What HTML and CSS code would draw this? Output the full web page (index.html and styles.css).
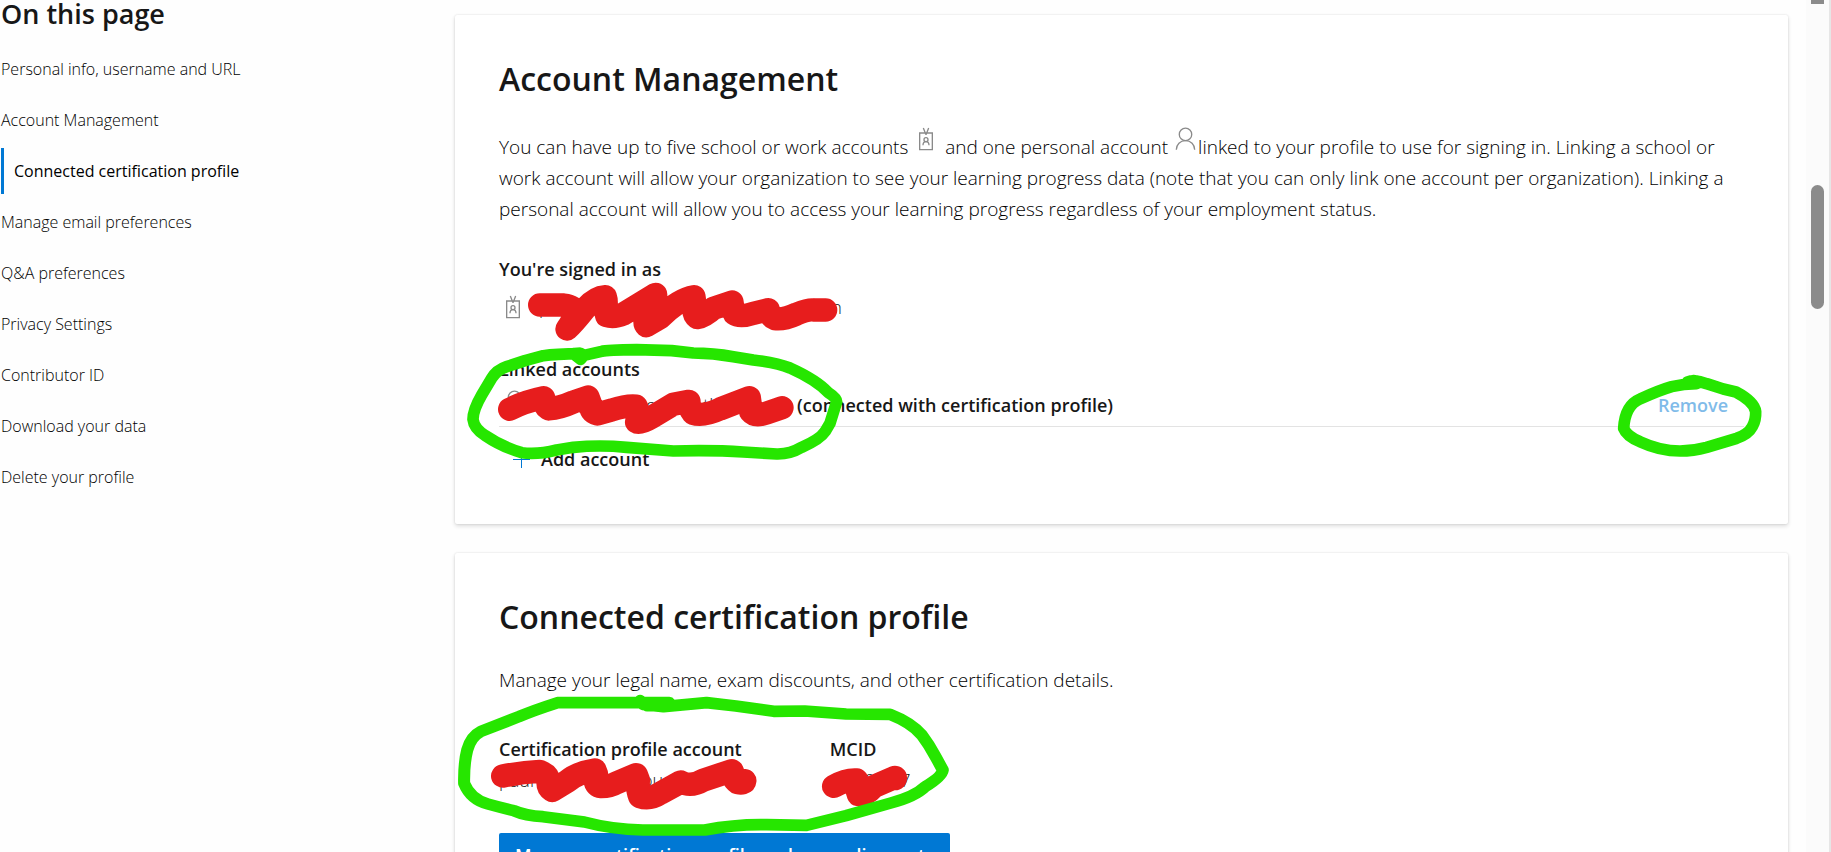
FILE: index.html
```html
<!DOCTYPE html>
<html lang="en">
<head>
<meta charset="utf-8">
<title>Profile settings</title>
<link rel="stylesheet" href="styles.css">
</head>
<body>
<svg class="defs" aria-hidden="true">
  <symbol id="badge" viewBox="0 0 48 72">
    <path d="M5 18h38v50H5zM16 3l8 20M32 3l-8 20M15 55c0-8 4-11 9-11s9 3 9 11" />
    <circle cx="24" cy="38" r="6" />
  </symbol>
  <symbol id="person" viewBox="0 0 64 72">
    <circle cx="32" cy="22" r="19" />
    <path d="M4 69c0-16 12-28 28-28s28 12 28 28" />
  </symbol>
</svg>
<div class="page">
  <nav class="toc" aria-labelledby="toc-title">
    <h2 class="toc-title" id="toc-title">On this page</h2>
    <ul class="toc-list">
      <li><a class="toc-link" href="#info">Personal info, username and URL</a></li>
      <li><a class="toc-link" href="#account">Account Management</a></li>
      <li><a class="toc-link active" href="#certification">Connected certification profile</a></li>
      <li><a class="toc-link" href="#email">Manage email preferences</a></li>
      <li><a class="toc-link" href="#qna">Q&amp;A preferences</a></li>
      <li><a class="toc-link" href="#privacy">Privacy Settings</a></li>
      <li><a class="toc-link" href="#contributor">Contributor ID</a></li>
      <li><a class="toc-link" href="#download">Download your data</a></li>
      <li><a class="toc-link" href="#delete">Delete your profile</a></li>
    </ul>
  </nav>
  <main class="content">
    <section class="card" id="account">
      <h2 class="card-title">Account Management</h2>
      <p class="text">You can have up to five school or work accounts <svg class="icon badge inline"><use href="#badge" /></svg> and one personal account <svg class="icon person inline"><use href="#person" /></svg>linked to your profile to use for signing in. Linking a school or work account will allow your organization to see your learning progress data (note that you can only link one account per organization). Linking a personal account will allow you to access your learning progress regardless of your employment status.</p>
      <h3 class="label signed">You're signed in as</h3>
      <div class="signed-row">
        <svg class="icon badge"><use href="#badge" /></svg>
        <span class="masked"><span>p</span><span>n</span></span>
      </div>
      <h3 class="label linked">Linked accounts</h3>
      <div class="linked-row">
        <span class="linked-account"><svg class="icon person"><use href="#person" /></svg><span>ou</span><span>tl</span></span>
        <span class="strong">(connected with certification profile)</span>
        <button class="remove" type="button" disabled>Remove</button>
      </div>
      <button class="add" type="button"><svg class="plus" viewBox="0 0 17 17"><path d="M8 0h1v8h8v1H9v8H8V9H0V8h8z" /></svg>Add account</button>
    </section>
    <section class="card" id="certification">
      <h2 class="card-title">Connected certification profile</h2>
      <p class="text">Manage your legal name, exam discounts, and other certification details.</p>
      <dl class="details">
        <div><dt class="label">Certification profile account</dt><dd class="fragments"><span>paul</span><span>ou</span></dd></div>
        <div><dt class="label">MCID</dt><dd class="fragments mcid"><span>9</span><span>9</span><span>7</span></dd></div>
      </dl>
      <button class="primary" type="button">Manage certification profile and exam discounts</button>
    </section>
  </main>
  <div class="scrollbar" aria-hidden="true"><span class="arrow"></span><span class="thumb"></span></div>

  <svg class="ink ink-accounts" viewBox="0 0 1200 840" aria-hidden="true">
    <g class="red">
      <path d="M239 165H312Q342 168 345 188Q340 212 321 237Q340 220 375 176Q405 142 436 140Q440 152 438 166Q435 185 440 197Q462 204 490 192L587 133V147Q567 180 556 208Q553 222 559 227L600 203Q655 148 702 140Q705 155 702 175Q700 194 712 203Q735 198 760 175L816 156Q818 174 823 191Q840 203 880 190L925 179Q930 200 945 206Q970 210 1010 192Q1045 178 1060 180H1097" />
      <path d="M149 478Q190 456 251 443Q250 466 266 477Q300 474 340 456L384 441L392 463Q389 486 412 492L455 480Q500 465 528 468Q538 485 530 516Q540 523 575 502L640 463L687 454Q687 475 699 490Q730 500 780 477L868 443Q872 465 872 485Q885 501 920 489L966 473" />
    </g>
    <path class="green" d="M362 328L340 311L362 310Q285 312 250 317L195 332L140 350Q110 360 95 385L65 435Q39 480 39 508Q42 535 75 556Q125 590 185 608Q230 615 290 600L340 592Q420 584 500 592L640 603Q760 600 850 606L950 612Q990 613 1025 592Q1080 568 1095 545L1110 520L1130 455Q1130 444 1105 428Q1070 390 990 354Q950 338 880 330L820 320Q760 309 700 309L635 302L530 299Q440 300 425 304L372 316Z" />
  </svg>
  <svg class="ink ink-remove" viewBox="0 0 813 570" aria-hidden="true">
    <path class="green" d="M382 66Q400 60 418 65L410 71Q370 72 335 80Q300 90 240 117Q195 136 191 205Q200 228 240 245Q300 273 360 273Q400 273 440 262L530 235Q565 223 577 200Q588 180 587 155Q583 125 528 96L490 87L440 71Q420 64 400 62Z" />
  </svg>
  <svg class="ink ink-cert" viewBox="0 0 1568 816" preserveAspectRatio="none" aria-hidden="true">
    <g class="red">
      <path d="M154 588Q210 576 260 574Q285 584 286 604Q284 622 297 631L340 604Q370 578 420 570Q428 586 423 603Q424 618 440 620Q464 620 480 610L540 584L546 600Q544 630 552 650Q580 660 610 640L670 606Q700 622 735 601L818 572L828 600L835 608Q854 612 855 602" />
      <path d="M1115 619Q1150 598 1180 600Q1180 625 1187 644Q1205 648 1230 620L1292 592V596" />
    </g>
    <path class="green" d="M552 362L572 377H622L637 368H312Q240 392 200 410L90 454Q60 470 50 510Q40 550 41 610Q60 658 110 672Q145 682 185 692Q220 708 270 710L390 726Q470 748 560 750H740Q830 732 920 734L1035 736L1150 707L1280 669Q1350 650 1380 620Q1428 590 1431 570L1410 530Q1390 492 1370 465Q1340 428 1278 403L1150 402L1030 393L940 394L830 378L745 368L620 380L560 373Z" />
  </svg>
</div>
</body>
</html>
```
FILE: styles.css
```css
* { box-sizing: border-box; }

body {
  margin: 0;
  overflow: hidden;
  background: #fefefe;
  color: #171717;
  font-family: "Segoe UI", "Open Sans", sans-serif;
  font-size: 18px;
  line-height: 31px;
}

h2, h3, p, ul, dl, dd { margin: 0; padding: 0; }
ul { list-style: none; }
button { font: inherit; border: 0; background: none; padding: 0; }
.defs { position: absolute; width: 0; height: 0; }

.page {
  position: relative;
  display: grid;
  grid-template-columns: 455px 1fr 25px;
  height: 100vh;
  overflow: hidden;
}

.toc { padding-left: 1px; }
.toc-title {
  margin-bottom: 18px;
  font-size: 27px;
  font-weight: 600;
  line-height: 28px;
}
.toc-list { display: flex; flex-direction: column; gap: 5px; }
.toc-link {
  display: block;
  color: #000;
  font-size: 16px;
  font-weight: 300;
  line-height: 46px;
  text-decoration: none;
}
.toc-link.active {
  padding-left: 10px;
  border-left: 3px solid #0078d4;
  font-weight: 400;
}

.content { padding: 15px 18px 0 0; }
.card {
  margin-bottom: 29px;
  padding: 43px 44px 44px;
  background: #fff;
  border-radius: 2px;
  box-shadow: 0 2px 4px rgba(0, 0, 0, 0.14), 0 0 2px rgba(0, 0, 0, 0.12);
}
.card-title {
  margin-bottom: 27px;
  font-size: 32px;
  font-weight: 600;
  line-height: 42px;
}
.text { color: #000; font-size: 19px; font-weight: 300; }
.label, .strong, .add { font-size: 18px; font-weight: 600; }

.icon { fill: none; stroke: #8a8a8a; stroke-width: 4px; overflow: visible; }
.badge { width: 16px; height: 24px; }
.person { width: 21px; height: 24px; }
.inline { vertical-align: 3px; }
.badge.inline { margin: 0 6px 0 5px; }
.person.inline { margin: 0 2px; }

.signed { margin-top: 29px; }
.signed-row { display: flex; gap: 18px; align-items: center; height: 40px; padding: 4px 0 0 6px; }
.masked { display: flex; justify-content: space-between; width: 303px; font-weight: 300; }
.linked { margin-top: 29px; }
.linked-row {
  display: flex;
  align-items: center;
  height: 42px;
  padding-right: 16px;
  border-bottom: 1px solid #e3e3e3;
}
.linked-account { display: flex; gap: 36px; width: 298px; padding-left: 5px; font-weight: 300; }
.linked-account .person { margin-right: 85px; }
.remove { margin-left: auto; color: #80bbe9; font-weight: 600; }
.add { display: flex; align-items: center; gap: 11px; margin: 17px 0 5px 14px; color: #171717; }
.plus { width: 17px; height: 17px; fill: #0078d4; }

.details { display: flex; gap: 88px; margin: 38px 0 37px; }
.fragments { display: flex; gap: 108px; font-weight: 300; }
.mcid { gap: 25px; }
.primary {
  height: 44px;
  padding: 0 16px;
  background: #0078d4;
  border-radius: 2px;
  color: #fff;
  font-weight: 600;
}

.scrollbar { display: flex; flex-direction: column; align-items: center; background: #fbfbfb; border-right: 2px solid #e6e6e6; }
.arrow { width: 13px; height: 4px; background: #8b8b8b; }
.thumb { width: 13px; height: 124px; margin-top: 181px; border-radius: 7px; background: #8b8b8b; }

.ink { position: absolute; fill: none; stroke-linecap: round; stroke-linejoin: round; overflow: visible; pointer-events: none; }
.ink-accounts { left: 460px; top: 250px; width: 400px; height: 280px; }
.ink-remove { right: 0; top: 360px; width: 271px; height: 190px; }
.ink-cert { left: 450px; top: 580px; width: 540px; height: 272px; }
.red { stroke: #e71d1d; stroke-width: 70px; }
.green { stroke: #26e600; stroke-width: 35px; }
```
